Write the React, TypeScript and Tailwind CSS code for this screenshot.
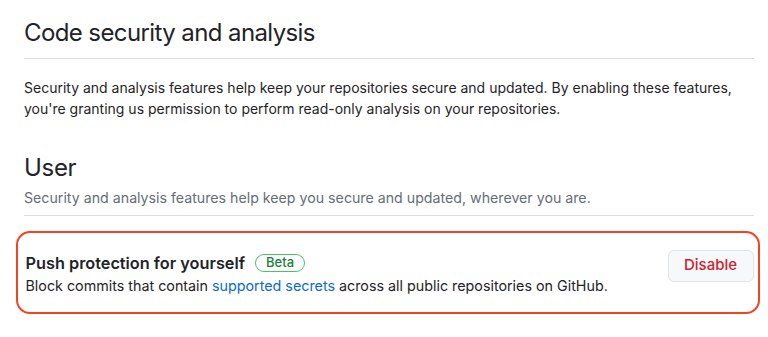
import React from "react";

export default function App() {
  return (
    <div
      className="w-[768px] h-[337px] bg-white text-[#1f2328] pl-6 pr-[14px] pt-[15px]"
      style={{ fontFamily: "Inter, 'Liberation Sans', sans-serif" }}
    >
      <h2 className="text-[24px] leading-[36px] tracking-[-0.6px] font-normal pb-[7px] border-b border-[#d8dee4]">
        Code security and analysis
      </h2>
      <p className="text-[14px] leading-[21px] mt-[18px]">
        Security and analysis features help keep your repositories secure and updated. By enabling these features,
        you're granting us permission to perform read-only analysis on your repositories.
      </p>

      <h3 className="text-[24px] leading-[30px] tracking-[-0.3px] font-normal mt-[34px]">User</h3>
      <p className="text-[14.2px] leading-[21px] text-[#656d76] mt-[4px] pb-[7px] border-b border-[#d8dee4]">
        Security and analysis features help keep you secure and updated, wherever you are.
      </p>

      <div className="-ml-2 -mr-[6px] mt-[15px] h-[83px] border-2 border-[#f5431f] rounded-[14px] flex items-start justify-between pl-[7.5px] pr-[4.5px] pt-[16.5px]">
        <div className="flex flex-col">
          <div className="flex items-center gap-[10px] mt-[1px] h-[24px]">
            <span className="text-[16.3px] leading-[24px] font-semibold">Push protection for yourself</span>
            <span className="text-[13px] leading-[15px] font-medium text-[#1a7f37] border border-[#4ac26b] rounded-full px-[10px] py-[0.5px]">
              Beta
            </span>
          </div>
          <p className="text-[14.3px] leading-[21px]">
            Block commits that contain <a className="text-[#0969da]">supported secrets</a> across all public repositories on GitHub.
          </p>
        </div>
        <button className="h-[32px] w-[86px] rounded-[6px] border border-[#e1e4e8] bg-[#f6f8fa] text-[#cf222e] text-[15px] font-medium">
          Disable
        </button>
      </div>
    </div>
  );
}
